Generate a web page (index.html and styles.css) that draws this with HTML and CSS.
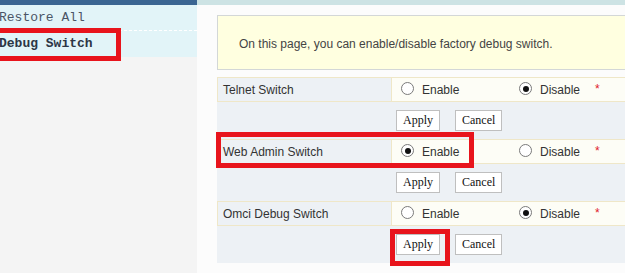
FILE: index.html
```html
<!DOCTYPE html>
<html>
<head>
    <title>Debug Switch</title>
    <link rel="stylesheet" href="styles.css">
</head>
<body>
    <div class="page">
        <aside class="menu">
            <div class="menu-top"></div>
            <ul class="menu-list">
                <li class="menu-item">Restore All</li>
                <li class="menu-item active">Debug Switch</li>
            </ul>
        </aside>
        <main class="main">
            <div class="main-top"></div>
            <div class="content">
                <div class="notice">On this page, you can enable/disable factory debug switch.</div>

                <div class="switch">
                    <div class="switch-row">
                        <div class="switch-label">Telnet Switch</div>
                        <div class="switch-value">
                            <span class="option"><span class="radio"></span>Enable</span>
                            <span class="option"><span class="radio checked"></span>Disable</span>
                            <span class="required">*</span>
                        </div>
                    </div>
                    <div class="switch-actions">
                        <button class="btn">Apply</button>
                        <button class="btn">Cancel</button>
                    </div>
                </div>

                <div class="switch">
                    <div class="switch-row">
                        <div class="switch-label">Web Admin Switch</div>
                        <div class="switch-value">
                            <span class="option"><span class="radio checked"></span>Enable</span>
                            <span class="option"><span class="radio"></span>Disable</span>
                            <span class="required">*</span>
                        </div>
                    </div>
                    <div class="switch-actions">
                        <button class="btn">Apply</button>
                        <button class="btn">Cancel</button>
                    </div>
                </div>

                <div class="switch">
                    <div class="switch-row">
                        <div class="switch-label">Omci Debug Switch</div>
                        <div class="switch-value">
                            <span class="option"><span class="radio"></span>Enable</span>
                            <span class="option"><span class="radio checked"></span>Disable</span>
                            <span class="required">*</span>
                        </div>
                    </div>
                    <div class="switch-actions">
                        <button class="btn">Apply</button>
                        <button class="btn">Cancel</button>
                    </div>
                </div>
            </div>
        </main>

        <!-- red annotation boxes -->
        <span class="mark mark-menu"></span>
        <span class="mark mark-web"></span>
        <span class="mark mark-apply"></span>
    </div>
</body>
</html>
```

FILE: styles.css
```css
body {
    margin: 0;
    overflow: hidden;
    background-color: #fcfcfc;
    font-family: 'Liberation Sans', Arial, sans-serif;
    font-size: 12px;
    color: #333333;
}

.page {
    position: relative;
    display: flex;
    height: 273px;
}

/* Left menu */
.menu {
    width: 197px;
    flex-shrink: 0;
    background-color: #f4f4f4;
}

.menu-top {
    height: 5px;
    background-color: #3b6592;
}

.menu-list {
    list-style: none;
    margin: 0;
    padding: 0;
    background-color: #e2f4f8;
}

.menu-item {
    height: 25px;
    line-height: 25px;
    margin-left: -1px;
    font-family: 'Liberation Mono', 'Courier New', monospace;
    font-size: 13px;
    color: #4a5566;
    border-bottom: 1px dashed #ffffff;
}

.menu-item.active {
    height: 26px;
    line-height: 26px;
    font-weight: 700;
    color: #2c3645;
    border-bottom: none;
}

/* Main area */
.main {
    flex-grow: 1;
    overflow: hidden;
}

.main-top {
    height: 5px;
    background-color: #cde3e4;
}

.content {
    width: 440px;
    padding: 10px 0 0 20px;
}

.notice {
    display: flex;
    align-items: center;
    box-sizing: border-box;
    height: 55px;
    padding: 3px 21px 0;
    background-color: #ffffe0;
    border: 1px solid #d3d7d7;
    color: #444444;
    margin-bottom: 7px;
}

/* Switch rows */
.switch-row {
    display: flex;
    height: 25px;
    box-sizing: border-box;
    border-top: 1px solid #efe7c8;
    border-bottom: 1px solid #efe7c8;
    border-left: 1px solid #efe7c8;
}

.switch-label {
    width: 174px;
    padding-left: 5px;
    box-sizing: border-box;
    display: flex;
    align-items: center;
    background-color: #edf1f5;
    border-right: 1px solid #efe7c8;
}

.switch-value {
    flex-grow: 1;
    display: flex;
    align-items: center;
    padding-left: 9px;
    background-color: #fdfdf6;
}

.option {
    display: inline-flex;
    align-items: center;
    width: 118px;
}

.radio {
    width: 11px;
    height: 11px;
    border: 1px solid #7a7a7a;
    border-radius: 50%;
    background-color: #ffffff;
    margin-right: 8px;
    margin-top: -2px;
    display: inline-flex;
    align-items: center;
    justify-content: center;
}

.radio.checked::after {
    content: "";
    width: 6px;
    height: 6px;
    border-radius: 50%;
    background-color: #111111;
}

.required {
    color: #e0202a;
    margin-left: -42px;
    margin-top: -2px;
}

.switch-actions {
    display: flex;
    align-items: center;
    gap: 15px;
    height: 37px;
    padding-left: 179px;
    background-color: #edf1f5;
}

.btn {
    height: 21px;
    padding: 0 6px;
    font-family: 'Liberation Serif', 'Times New Roman', serif;
    font-size: 12px;
    color: #111111;
    background-color: #ffffff;
    border: 1px solid #bfbfbf;
    border-radius: 0;
}

/* Red highlight boxes drawn over the screenshot */
.mark {
    position: absolute;
    box-sizing: border-box;
    border: 5px solid #e8141c;
}

.mark-menu {
    left: -5px;
    top: 28px;
    width: 126px;
    height: 33px;
}

.mark-web {
    left: 216px;
    top: 132px;
    width: 258px;
    height: 36px;
}

.mark-apply {
    left: 390px;
    top: 229px;
    width: 60px;
    height: 37px;
}
```
